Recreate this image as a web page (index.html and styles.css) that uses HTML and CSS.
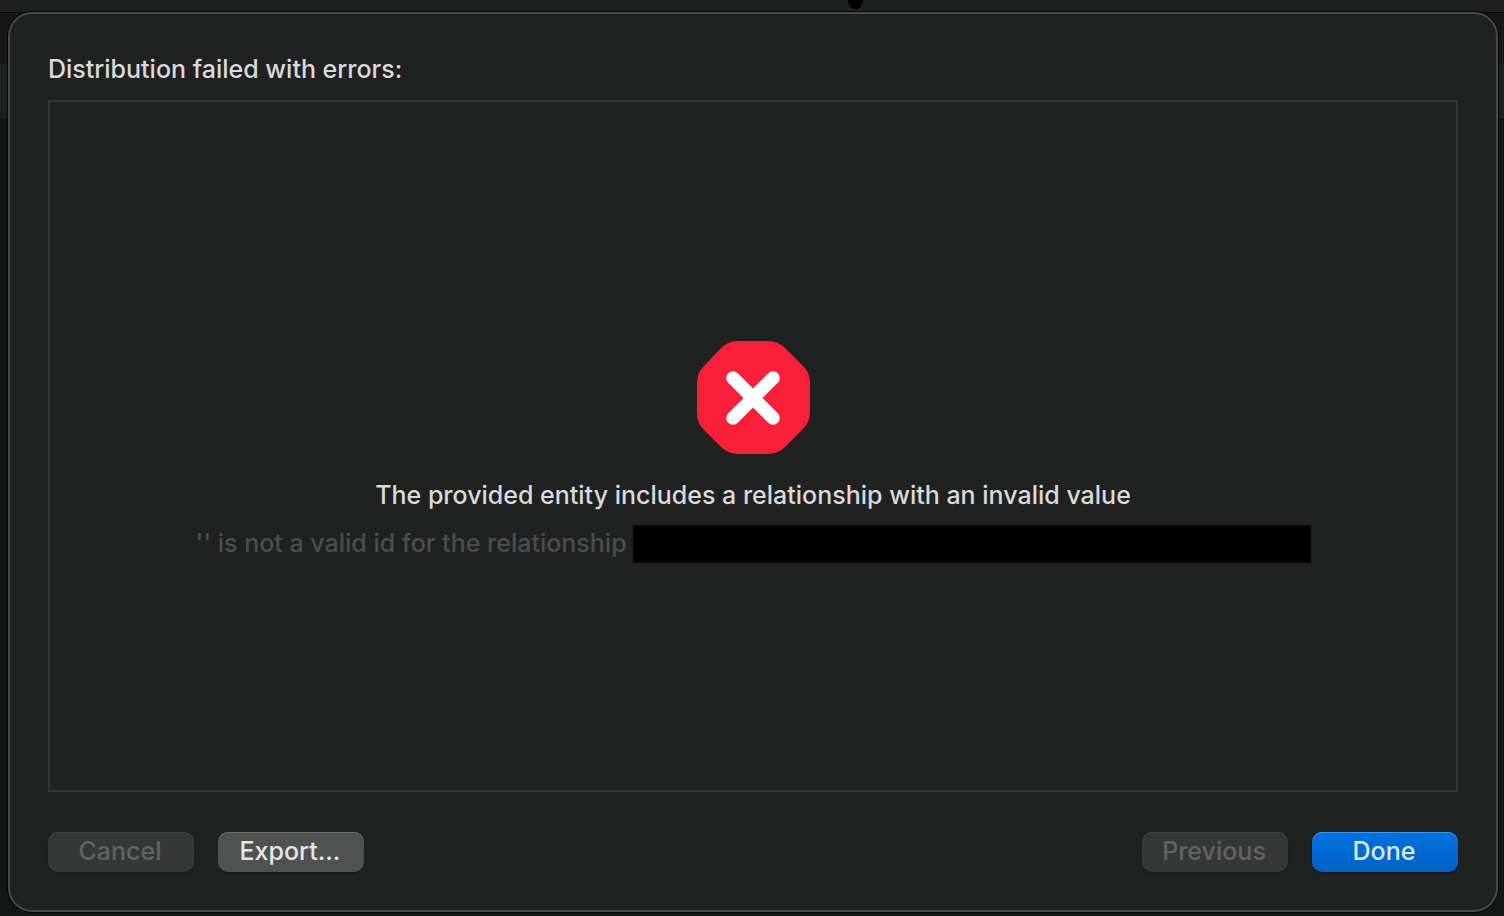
FILE: index.html
```html
<!DOCTYPE html>
<html lang="en">
<head>
  <meta charset="UTF-8">
  <meta name="viewport" content="width=device-width, initial-scale=1.0">
  <title>Distribution failed</title>
  <link rel="stylesheet" href="styles.css">
</head>
<body>
  <span class="window-dot"></span>

  <main class="sheet">
    <h1 class="sheet-title">Distribution failed with errors:</h1>

    <section class="error-panel">
      <svg class="error-icon" viewBox="0 0 114 114" aria-hidden="true">
        <path fill="#f82038" d="M42 0H72Q82 0 89 7L107 25Q114 32 114 42V71Q114 81 107 88L89 106Q82 113 72 113H42Q32 113 25 106L8 89Q1 82 1 72V42Q1 32 8 25L25 7Q32 0 42 0Z"/>
        <path stroke="#fff" stroke-width="13.500" stroke-linecap="round" d="M37 37L77 77M77 37L37 77"/>
      </svg>
      <h2 class="error-title">The provided entity includes a relationship with an invalid value</h2>
      <p class="error-detail">
        <span>'' is not a valid id for the relationship</span>
        <span class="redacted"></span>
      </p>
    </section>

    <div class="actions">
      <button type="button" class="btn" disabled>Cancel</button>
      <button type="button" class="btn">Export...</button>
      <button type="button" class="btn push-right" disabled>Previous</button>
      <button type="button" class="btn btn-primary">Done</button>
    </div>
  </main>
</body>
</html>
```
FILE: styles.css
```css
* {
  box-sizing: border-box;
}

body {
  display: flex;
  min-height: 100vh;
  margin: 0;
  padding: 12px 6px 4px 8px;
  background: linear-gradient(#1d201f 0 12px, #060606 12px 13px, #171717 13px 64px, #1d1f1e 64px 116px, #232524 116px 118px, #141615 118px);
  color: #d9dad9;
  font-family: Inter, "Liberation Sans", sans-serif;
  font-size: 25px;
  font-weight: 500;
}

.window-dot {
  position: absolute;
  top: -7px;
  left: calc(50% + 96px);
  width: 15px;
  height: 16px;
  border-radius: 50%;
  background-color: #000;
}

.sheet {
  display: flex;
  flex: 1;
  flex-direction: column;
  padding: 38px;
  border: 2px solid #484a49;
  border-radius: 24px;
  background-color: #202221;
  box-shadow: 0 0 0 1px #050505;
}

.sheet-title,
.error-title {
  margin: 0;
  font-size: 25px;
  font-weight: 500;
  line-height: 34px;
}

.sheet-title {
  margin-bottom: 14px;
}

.error-panel {
  display: flex;
  flex: 1;
  flex-direction: column;
  align-items: center;
  justify-content: center;
  padding-top: 12px;
  border: 2px solid #343635;
}

.error-icon {
  width: 114px;
  height: 114px;
  fill: none;
}

.error-title {
  margin-top: 23px;
}

.error-detail {
  display: flex;
  gap: 6px;
  margin: 13px 0 0;
  color: #4c4e4d;
  line-height: 36px;
}

.redacted {
  width: 678px;
  height: 38px;
  background-color: #000;
}

.actions {
  display: flex;
  gap: 24px;
  margin-top: 40px;
}

.btn {
  width: 146px;
  height: 40px;
  padding: 0 2px 2px 0;
  border: none;
  border-radius: 10px;
  background-color: #505251;
  box-shadow: inset 0 1px #6c6e6d, 0 1px 2px rgba(0, 0, 0, 0.35);
  color: #e4e5e4;
  font: inherit;
  line-height: 32px;
}

.btn:disabled {
  background-color: #363837;
  box-shadow: inset 0 1px #414342, 0 1px 2px rgba(0, 0, 0, 0.2);
  color: #626463;
}

.btn-primary {
  background: linear-gradient(#0172e3, #0161c3);
  box-shadow: inset 0 1px #3f94eb, 0 1px 2px rgba(0, 0, 0, 0.35);
  color: #dbe9fb;
}

.push-right {
  margin-left: auto;
}
```
